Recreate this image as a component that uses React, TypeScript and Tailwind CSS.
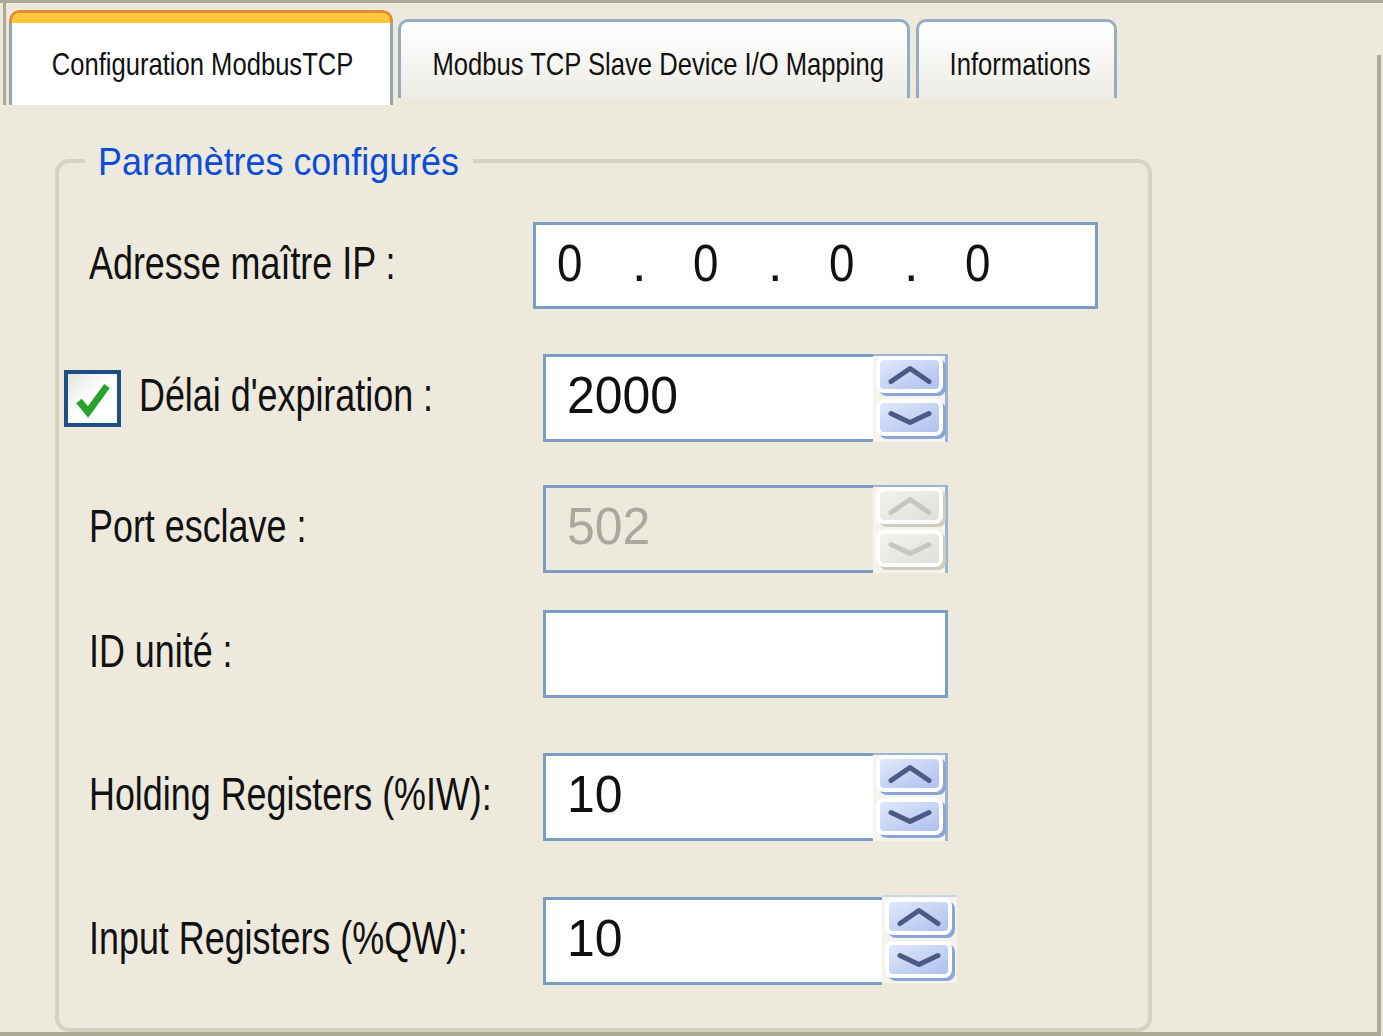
import React from "react";

const LABEL =
  "inline-block origin-left scale-x-[0.78] -translate-y-[3px] whitespace-nowrap text-[46px] leading-none text-[#111]";
const VALUE =
  "inline-block origin-left scale-x-[0.96] -translate-y-[3px] whitespace-nowrap text-[52px] leading-none";

function TabText({ children }: { children: React.ReactNode }) {
  return (
    <span className="inline-block shrink-0 origin-center scale-x-[0.8] whitespace-nowrap text-[32px] leading-none text-[#111]">
      {children}
    </span>
  );
}

function SpinBtn({ up, disabled }: { up?: boolean; disabled?: boolean }) {
  const shadow = disabled
    ? "shadow-[3px_3px_0_#CFCDBB]"
    : "shadow-[3px_3px_0_#8DA4D8]";
  const inner = disabled
    ? "from-[#F3F2EF] to-[#E1DFD9]"
    : "from-[#E0E8FC] to-[#AFC0EE]";
  const stroke = disabled ? "#C8C7BE" : "#4A5B85";
  return (
    <div className={`h-[37px] w-[67px] rounded-[8px] bg-white p-[4px] ${shadow}`}>
      <div
        className={`flex h-full w-full items-center justify-center rounded-[4px] bg-linear-to-br ${inner}`}
      >
        <svg width="44" height="20" viewBox="0 0 44 20">
          <polyline
            points={up ? "3,16.5 22,3.5 41,16.5" : "3,5.5 22,14.5 41,5.5"}
            fill="none"
            stroke={stroke}
            strokeWidth="5"
            strokeLinecap="round"
            strokeLinejoin="round"
          />
        </svg>
      </div>
    </div>
  );
}

function Spinner({ disabled, last }: { disabled?: boolean; last?: boolean }) {
  return (
    <div
      className={
        last
          ? "-mt-[2px] flex h-[88px] w-[75px] flex-col gap-[6px] border-t-[2px] border-[#C9D6E6] bg-[#F4F3EE] pl-[3px] pt-[1px]"
          : "flex h-[88px] w-[75px] flex-col gap-[6px] border-t-[2px] border-r-[3px] border-[#9CB3D2] bg-[#F4F3EE] pl-[3px]"
      }
    >
      <SpinBtn up disabled={disabled} />
      <SpinBtn disabled={disabled} />
    </div>
  );
}

function SpinField({
  value,
  disabled,
  last,
}: {
  value: string;
  disabled?: boolean;
  last?: boolean;
}) {
  return (
    <div className="flex">
      <div
        className={`flex h-[88px] items-center border-y-[3px] border-l-[3px] border-[#7C9DC3] pl-[21px] ${
          last ? "w-[339px]" : "w-[330px]"
        } ${disabled ? "bg-[#EDE9DD] text-[#A9A89F]" : "bg-white text-[#111]"}`}
      >
        <span className={VALUE}>{value}</span>
      </div>
      <Spinner disabled={disabled} last={last} />
    </div>
  );
}

function Row({
  mt,
  h,
  label,
  children,
}: {
  mt: string;
  h: string;
  label: React.ReactNode;
  children: React.ReactNode;
}) {
  return (
    <div className={`flex items-center ${mt} ${h}`}>
      {label}
      {children}
    </div>
  );
}

export default function App() {
  return (
    <div className="flex h-[1036px] w-[1383px] flex-col overflow-hidden border-t-[3px] border-[#ADAA98] bg-[#EDE9DD] font-['Liberation_Sans',Arial,sans-serif]">
      {/* tab strip */}
      <div className="flex h-[102px] shrink-0 pl-[3px]">
        <div className="flex h-full flex-1 items-start border-l-[3px] border-[#ADAA98]">
          <div className="ml-[3px] mt-[7px] flex h-[95px] w-[384px] flex-col overflow-hidden rounded-t-[10px]">
            <div className="h-[13px] rounded-t-[10px] border-x-[3px] border-t-[3px] border-[#E38A32] bg-[#FFC83A]" />
            <div className="flex flex-1 items-center justify-center border-x-[3px] border-[#9AA3A9] bg-white pb-[1px] pl-[4px]">
              <TabText>Configuration ModbusTCP</TabText>
            </div>
          </div>
          <div className="ml-[5px] mt-[16px] flex h-[79px] w-[512px] items-center justify-center overflow-hidden rounded-t-[10px] border-x-[3px] border-t-[3px] border-[#97ACC1] bg-linear-to-b from-white to-[#EDECE6] pl-[8px] pt-[7px]">
            <TabText>Modbus TCP Slave Device I/O Mapping</TabText>
          </div>
          <div className="ml-[6px] mt-[16px] flex h-[79px] w-[201px] items-center justify-center overflow-hidden rounded-t-[10px] border-x-[3px] border-t-[3px] border-[#97ACC1] bg-linear-to-b from-white to-[#EDECE6] pl-[8px] pt-[7px]">
            <TabText>Informations</TabText>
          </div>
          <div className="mr-[2px] ml-auto mt-[52px] w-[4px] self-stretch bg-[#ADAA98]" />
        </div>
      </div>

      {/* page */}
      <div className="mr-[2px] flex-1 border-r-[4px] border-b-[4px] border-[#ADAA98]">
        <div className="relative ml-[55px] mt-[54px] h-[873px] w-[1097px] rounded-[14px] border-[4px] border-[#D5D3C0]">
          <div className="absolute -top-[24px] left-[26px] flex h-[44px] w-[388px] items-center bg-[#EDE9DD] pl-[13px]">
            <span className="inline-block origin-left scale-x-[0.92] whitespace-nowrap text-[39px] leading-none text-[#0B4CD8]">
              Paramètres configurés
            </span>
          </div>

          <Row
            mt="mt-[59px]"
            h="h-[87px]"
            label={
              <div className="w-[474px] shrink-0 pl-[30px]">
                <span className={LABEL}>Adresse maître IP :</span>
              </div>
            }
          >
            <div className="flex h-[87px] w-[565px] items-center border-[3px] border-[#7C9DC3] bg-white pl-[21px] text-[#111]">
              {[0, 1, 2, 3].map((i) => (
                <div key={i} className="flex w-[136px] shrink-0 items-center">
                  <span className="inline-block w-[75px] shrink-0 origin-left scale-x-[0.88] -translate-y-[3px] text-[52px] leading-none">
                    0
                  </span>
                  {i < 3 && (
                    <span className="inline-block -translate-y-[3px] text-[52px] leading-none">
                      .
                    </span>
                  )}
                </div>
              ))}
            </div>
          </Row>

          <Row
            mt="mt-[45px]"
            h="h-[88px]"
            label={
              <div className="flex w-[484px] shrink-0 items-center gap-[18px] pl-[5px]">
                <div className="h-[57px] w-[57px] shrink-0 border-[4px] border-[#1E4F82] bg-linear-to-br from-[#E4E4E0] via-white to-white">
                  <svg width="49" height="49" viewBox="0 0 49 49">
                    <polyline
                      points="11,27 20,38 39,12"
                      fill="none"
                      stroke="#27A327"
                      strokeWidth="7"
                      strokeLinejoin="miter"
                    />
                  </svg>
                </div>
                <span className={LABEL}>Délai d'expiration :</span>
              </div>
            }
          >
            <SpinField value="2000" />
          </Row>

          <Row
            mt="mt-[43px]"
            h="h-[88px]"
            label={
              <div className="w-[484px] shrink-0 pl-[30px]">
                <span className={LABEL}>Port esclave :</span>
              </div>
            }
          >
            <SpinField value="502" disabled />
          </Row>

          <Row
            mt="mt-[37px]"
            h="h-[88px]"
            label={
              <div className="w-[484px] shrink-0 pl-[30px]">
                <span className={LABEL}>ID unité :</span>
              </div>
            }
          >
            <div className="h-[88px] w-[405px] border-[3px] border-[#7C9DC3] bg-white" />
          </Row>

          <Row
            mt="mt-[55px]"
            h="h-[88px]"
            label={
              <div className="w-[484px] shrink-0 pl-[30px]">
                <span className={LABEL}>Holding Registers (%IW):</span>
              </div>
            }
          >
            <SpinField value="10" />
          </Row>

          <Row
            mt="mt-[56px]"
            h="h-[88px]"
            label={
              <div className="w-[484px] shrink-0 pl-[30px]">
                <span className={LABEL}>Input Registers (%QW):</span>
              </div>
            }
          >
            <SpinField value="10" last />
          </Row>
        </div>
      </div>
    </div>
  );
}
